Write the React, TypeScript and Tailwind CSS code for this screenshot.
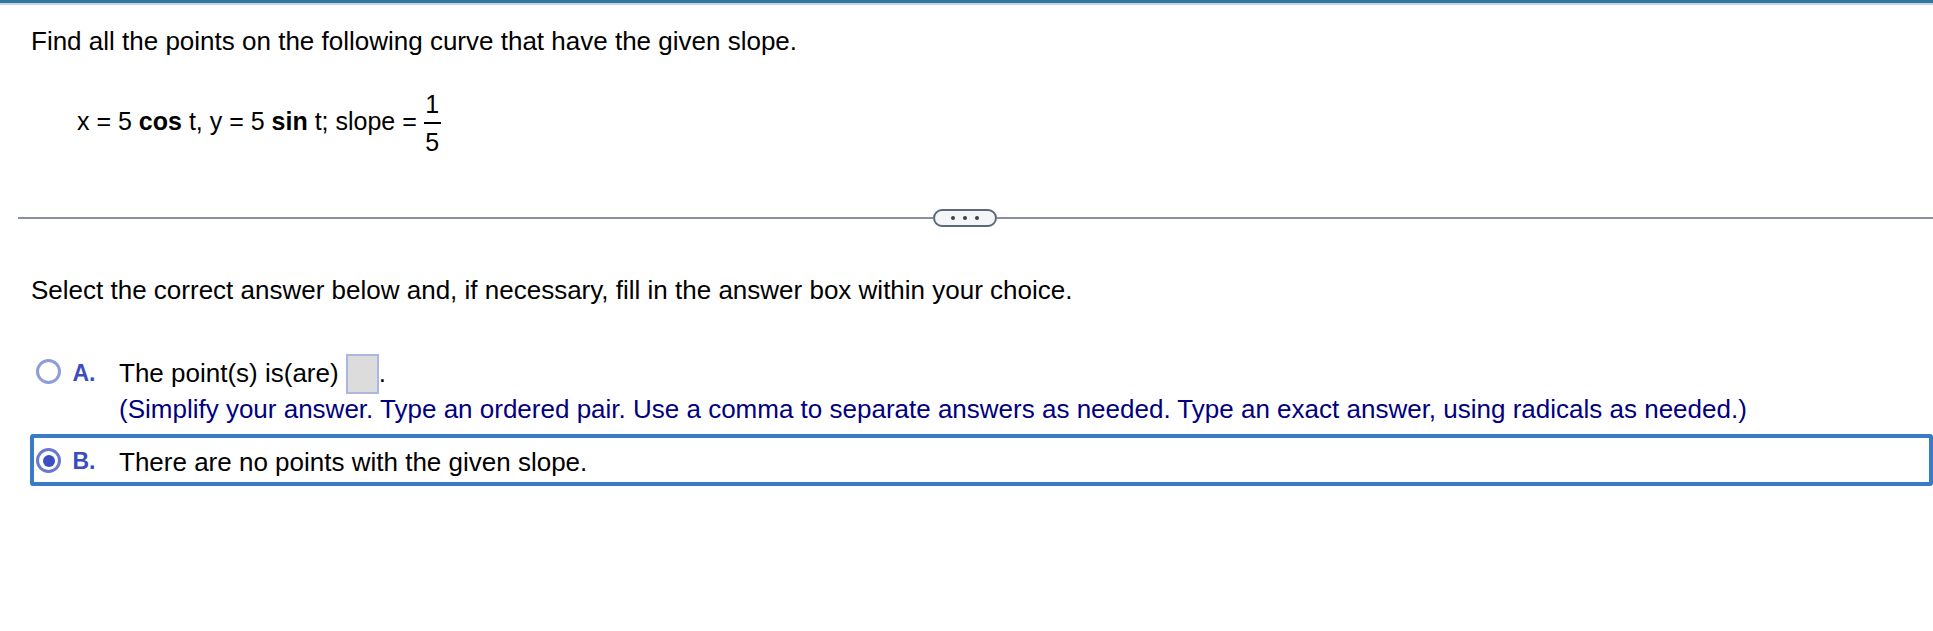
import React from "react";

function Radio({ selected }: { selected: boolean }) {
  return (
    <div
      className={
        selected
          ? "w-[25px] h-[25px] rounded-full border-[3px] border-[#6a78cf] bg-white flex items-center justify-center shrink-0"
          : "w-[25px] h-[25px] rounded-full border-[3px] border-[#8e9cdb] bg-white shrink-0"
      }
    >
      {selected && <div className="w-[12px] h-[12px] rounded-full bg-[#3c4fc0]" />}
    </div>
  );
}

export default function App() {
  return (
    <div className="w-full min-h-[631px] bg-white text-black font-['Liberation_Sans',Arial,Helvetica,sans-serif]">
      <div className="h-[3px] bg-[#2f789e]" />
      <div className="h-[2px] bg-[#c8d3dd]" />

      <div className="pl-[31px] pt-[21px] text-[26px] leading-[30px] whitespace-nowrap">
        Find all the points on the following curve that have the given slope.
      </div>

      <div className="pl-[77px] mt-[35px] text-[25px] leading-[30px] whitespace-nowrap">
        x = 5 <b>cos</b> t, y = 5 <b>sin</b> t; slope ={" "}
        <span className="inline-flex flex-col items-center align-middle">
          <span className="leading-[26px]">1</span>
          <span className="h-[2px] w-[17px] bg-black my-[5px]" />
          <span className="leading-[26px]">5</span>
        </span>
      </div>

      <div className="flex items-center ml-[18px] mt-[53.5px]">
        <div className="w-[915px] h-[2px] bg-[#8b909e]" />
        <div className="w-[64px] h-[18px] rounded-full border-2 border-[#5d6878] bg-[#f4f5f7] flex items-center justify-center gap-[8px] shrink-0">
          <span className="w-[4px] h-[4px] rounded-full bg-[#3a404c]" />
          <span className="w-[4px] h-[4px] rounded-full bg-[#3a404c]" />
          <span className="w-[4px] h-[4px] rounded-full bg-[#3a404c]" />
        </div>
        <div className="flex-1 h-[2px] bg-[#8b909e]" />
      </div>

      <div className="pl-[31px] mt-[48.3px] text-[26px] leading-[30px] whitespace-nowrap">
        Select the correct answer below and, if necessary, fill in the answer box within your choice.
      </div>

      <div className="ml-[30px] mt-[45.7px] flex flex-col gap-[5.5px]">
        <div className="border-[4px] border-transparent rounded-[3px] flex items-start">
          <div className="ml-[2px] mt-[5px]">
            <Radio selected={false} />
          </div>
          <div className="w-[58px] pl-[11.5px] mt-[6.6px] text-[23px] leading-[24px] font-bold text-[#3a4dc0] shrink-0">
            A.
          </div>
          <div className="text-[26px] leading-[30px]">
            <div className="whitespace-nowrap">
              The point(s) is(are){" "}
              <span className="inline-block align-[-11.7px] w-[33px] h-[40px] bg-[#dcdcdc] border-2 border-[#a9b7e2]" />
              .
            </div>
            <div className="text-[#000080] whitespace-nowrap">
              (Simplify your answer. Type an ordered pair. Use a comma to separate answers as needed. Type an exact answer, using radicals as needed.)
            </div>
          </div>
        </div>

        <div className="border-[4px] border-[#3a7bc8] rounded-[3px] flex items-start pt-[9.2px] pb-[5.3px]">
          <div className="ml-[2px] mt-[1px]">
            <Radio selected={true} />
          </div>
          <div className="w-[58px] pl-[11.5px] mt-[2.3px] text-[23px] leading-[24px] font-bold text-[#3a4dc0] shrink-0">
            B.
          </div>
          <div className="text-[26px] leading-[30px] whitespace-nowrap">
            There are no points with the given slope.
          </div>
        </div>
      </div>
    </div>
  );
}
